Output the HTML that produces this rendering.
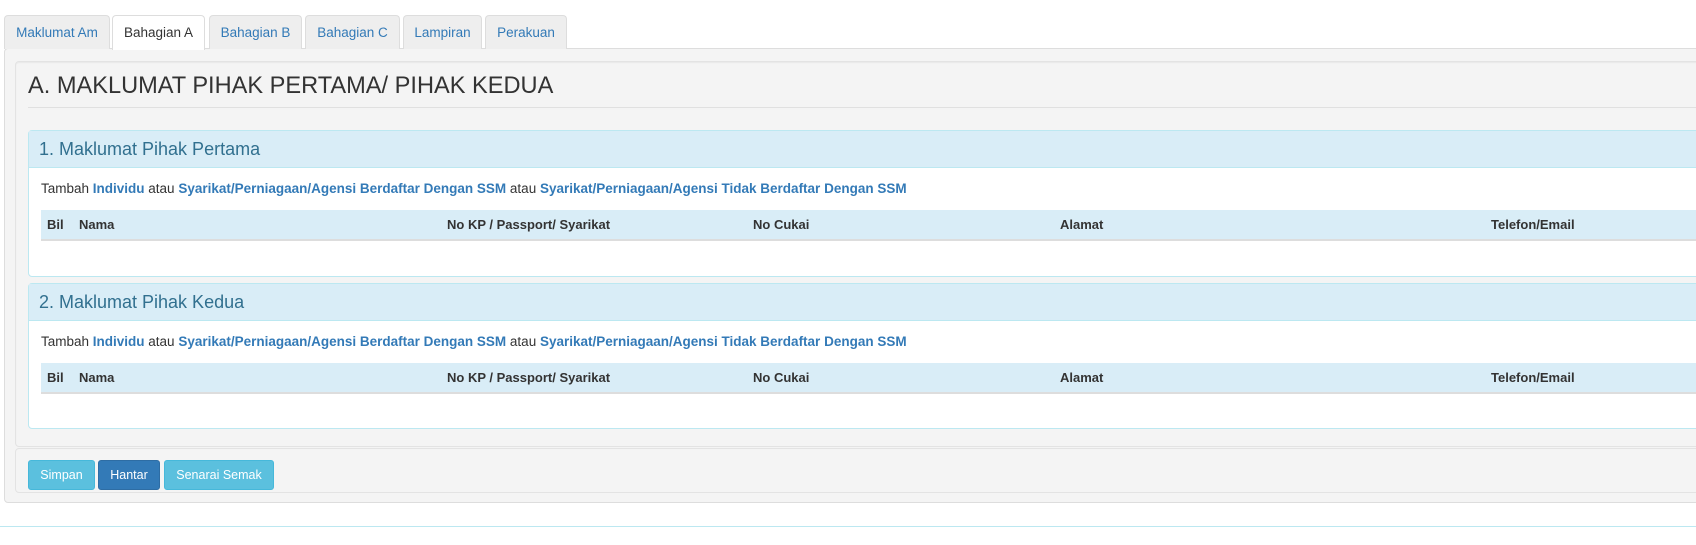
<!DOCTYPE html>
<html><head><meta charset="utf-8"><style>
*{box-sizing:border-box;margin:0;padding:0}
body{width:1696px;height:545px;overflow:hidden;background:#fff;font-family:"Liberation Sans",Arial,sans-serif;color:#333;position:relative}
.tab{position:absolute;top:15px;height:34px;background:#eee;border:1px solid #ddd;border-bottom:none;border-radius:4px 4px 0 0;font-size:13.5px;color:#337ab7;text-align:center;line-height:33px}
.tab.act{background:#fff;color:#333;height:35px;z-index:2}
.outer{position:absolute;left:4px;top:48px;width:1800px;height:455px;background:#f4f4f4;border:1px solid #ddd;border-radius:4px}
.well{position:absolute;left:15px;top:61px;width:1800px;height:386px;background:#f4f4f4;border:1px solid #e3e3e3;border-radius:4px;box-shadow:inset 0 1px 1px rgba(0,0,0,.05)}
h1{position:absolute;left:28px;top:73px;font-size:23.6px;font-weight:normal;color:#333}
.hr{position:absolute;left:28px;top:107px;width:1800px;border-top:1px solid #e0e0e0}
.panel{position:absolute;left:28px;width:1800px;background:#fff;border:1px solid #bce8f1;border-radius:4px}
.ph{background:#d9edf7;color:#31708f;font-size:18px;height:37px;line-height:36px;padding-left:10px;border-bottom:1px solid #bce8f1}
.tb{position:absolute;left:12px;font-size:13.5px}
.tb b{color:#337ab7}
.th{position:absolute;left:12px;width:1800px;height:31px;background:#d9edf7;border-bottom:2px solid #ddd;font-size:13px;font-weight:bold}
.th span{position:absolute;top:7px}
.bw{position:absolute;left:15px;top:448px;width:1800px;height:45px;border:1px solid #e3e3e3;border-radius:4px;background:#f4f4f4}
.btn{position:absolute;top:460px;height:30px;border-radius:3px;color:#fff;font-size:12.5px;line-height:29px;text-align:center}
.info{background:#5bc0de;border:1px solid #46b8da}
.prim{background:#337ab7;border:1px solid #2e6da4}
</style></head><body>
<div class="outer"></div>
<div class="tab" style="left:4px;width:106px">Maklumat Am</div>
<div class="tab act" style="left:112px;width:93px">Bahagian A</div>
<div class="tab" style="left:209px;width:93px">Bahagian B</div>
<div class="tab" style="left:305px;width:95px">Bahagian C</div>
<div class="tab" style="left:403px;width:79px">Lampiran</div>
<div class="tab" style="left:485px;width:82px">Perakuan</div>
<div class="well"></div>
<h1>A. MAKLUMAT PIHAK PERTAMA/ PIHAK KEDUA</h1>
<div class="hr"></div>
<div class="panel" style="top:130px;height:147px">
<div class="ph">1. Maklumat Pihak Pertama</div>
<div class="tb" style="top:50px">Tambah <b>Individu</b> atau <b>Syarikat/Perniagaan/Agensi Berdaftar Dengan SSM</b> atau <b>Syarikat/Perniagaan/Agensi Tidak Berdaftar Dengan SSM</b></div>
<div class="th" style="top:79px"><span style="left:6px">Bil</span><span style="left:38px">Nama</span><span style="left:406px">No KP / Passport/ Syarikat</span><span style="left:712px">No Cukai</span><span style="left:1019px">Alamat</span><span style="left:1450px">Telefon/Email</span></div>
</div>
<div class="panel" style="top:283px;height:146px">
<div class="ph">2. Maklumat Pihak Kedua</div>
<div class="tb" style="top:50px">Tambah <b>Individu</b> atau <b>Syarikat/Perniagaan/Agensi Berdaftar Dengan SSM</b> atau <b>Syarikat/Perniagaan/Agensi Tidak Berdaftar Dengan SSM</b></div>
<div class="th" style="top:79px"><span style="left:6px">Bil</span><span style="left:38px">Nama</span><span style="left:406px">No KP / Passport/ Syarikat</span><span style="left:712px">No Cukai</span><span style="left:1019px">Alamat</span><span style="left:1450px">Telefon/Email</span></div>
</div>
<div class="bw"></div>
<div class="btn info" style="left:28px;width:67px">Simpan</div>
<div class="btn prim" style="left:98px;width:62px">Hantar</div>
<div class="btn info" style="left:164px;width:110px">Senarai Semak</div>
<div style="position:absolute;left:0;top:526px;width:1696px;border-top:1px solid #bce8f1"></div>
</body></html>
